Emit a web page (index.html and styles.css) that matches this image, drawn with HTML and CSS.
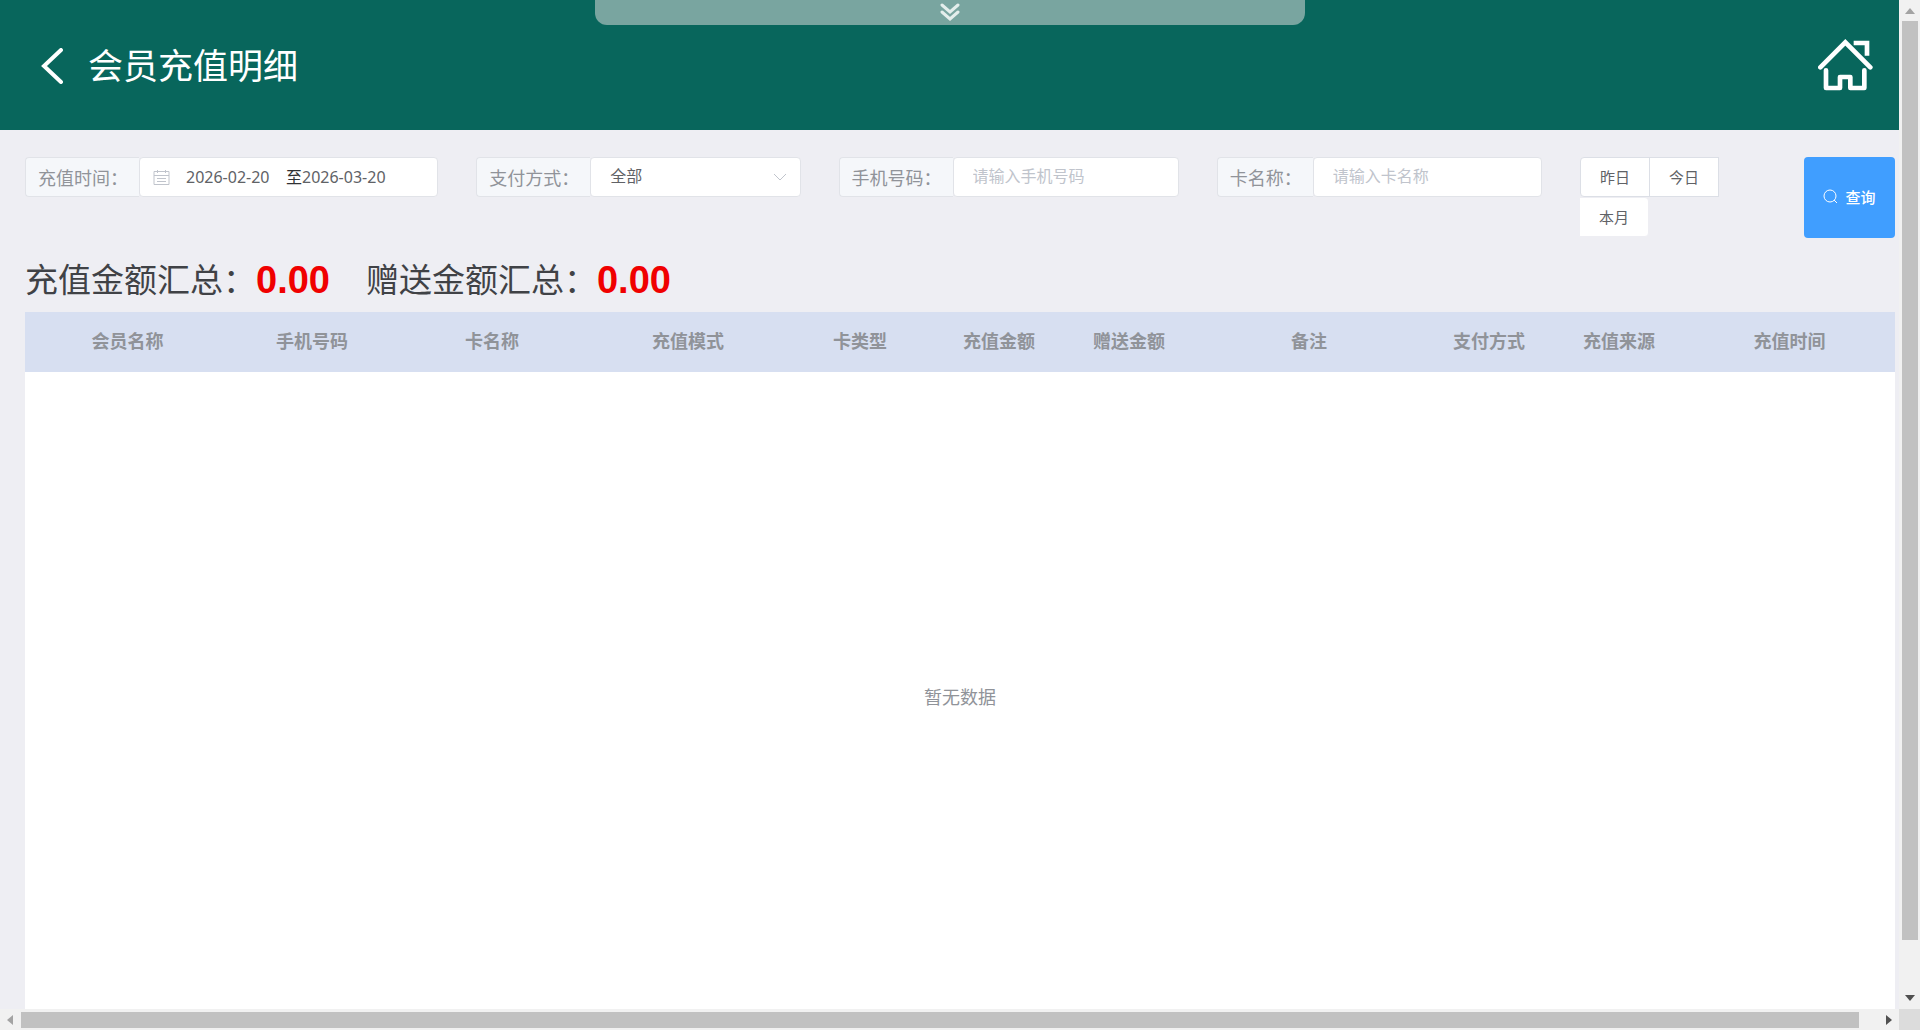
FILE: index.html
```html
<!DOCTYPE html>
<html lang="zh-CN">
<head>
    <meta charset="UTF-8">
    <meta name="viewport" content="width=device-width, initial-scale=1.0">
    <title>会员充值明细</title>
    <link rel="stylesheet" href="styles.css">
</head>
<body>
    <div class="window">
        <div class="page">
            <header class="header">
                <button type="button" class="back">
                    <svg width="22" height="36" viewBox="0 0 22 36"><path d="M20 2L3 18l17 16"/></svg>
                    <span class="title">会员充值明细</span>
                </button>
                <a href="#" class="home" aria-label="首页">
                    <svg width="55" height="52" viewBox="0 0 165 156">
                        <path d="M7 85L82 10l75 75" stroke-linecap="round"/>
                        <path d="M107 12h40v38" />
                        <path d="M24 94v53h42v-33h31v33h42V94" stroke-linecap="round" stroke-linejoin="round"/>
                    </svg>
                </a>
                <button type="button" class="pulldown" aria-label="展开">
                    <svg width="20" height="18" viewBox="0 0 20 18"><path d="M2 2l8 7 8-7M2 9l8 7 8-7"/></svg>
                </button>
            </header>

            <form class="filters">
                <div class="group">
                    <label for="startDate">充值时间：</label>
                    <div class="field date-range">
                        <svg class="calendar" width="17" height="17" viewBox="0 0 17 17"><path d="M1 2.5h15v13H1zM1 6.500h15M4.500 1v3M12.500 1v3M4 9.500h9M4 12.500h9"/></svg>
                        <input type="text" id="startDate" class="start" value="2026-02-20">
                        <span>至</span>
                        <input type="text" id="endDate" aria-label="结束日期" value="2026-03-20">
                    </div>
                </div>
                <div class="group">
                    <label for="payType">支付方式：</label>
                    <div class="field">
                        <select id="payType">
                            <option>全部</option>
                        </select>
                        <svg class="arrow" width="14" height="9" viewBox="0 0 14 9"><path d="M1 1l6 6 6-6"/></svg>
                    </div>
                </div>
                <div class="group">
                    <label for="phone">手机号码：</label>
                    <div class="field"><input type="text" id="phone" placeholder="请输入手机号码"></div>
                </div>
                <div class="group">
                    <label for="cardName">卡名称：</label>
                    <div class="field"><input type="text" id="cardName" placeholder="请输入卡名称"></div>
                </div>
                <div class="days">
                    <button type="button">昨日</button>
                    <button type="button">今日</button>
                    <button type="button">本月</button>
                </div>
                <button type="button" class="search">
                    <svg width="15" height="15" viewBox="0 0 15 15"><circle cx="7" cy="7" r="6"/><path d="M11 11l3 3"/></svg>
                    查询
                </button>
            </form>

            <div class="summary">
                <span>充值金额汇总：</span><b>0.00</b>
                <span class="second">赠送金额汇总：</span><b>0.00</b>
            </div>

            <div class="table-box">
                <table>
                    <colgroup>
                        <col class="w-name"><col class="w-phone"><col class="w-card"><col class="w-card"><col class="w-type"><col class="w-small"><col class="w-small"><col class="w-remark"><col class="w-small"><col class="w-small"><col class="w-time">
                    </colgroup>
                    <thead>
                        <tr>
                            <th>会员名称</th>
                            <th>手机号码</th>
                            <th>卡名称</th>
                            <th>充值模式</th>
                            <th>卡类型</th>
                            <th>充值金额</th>
                            <th>赠送金额</th>
                            <th>备注</th>
                            <th>支付方式</th>
                            <th>充值来源</th>
                            <th>充值时间</th>
                        </tr>
                    </thead>
                </table>
                <div class="empty">暂无数据</div>
            </div>
        </div>

        <div class="bar bar-y">
            <svg class="off" width="10" height="6" viewBox="0 0 10 6"><path d="M0 6l5-6 5 6z"/></svg>
            <div class="track"><div class="thumb"></div></div>
            <svg width="10" height="6" viewBox="0 0 10 6"><path d="M0 0l5 6 5-6z"/></svg>
        </div>
        <div class="bar bar-x">
            <svg class="off" width="6" height="10" viewBox="0 0 6 10"><path d="M6 0L0 5l6 5z"/></svg>
            <div class="track"><div class="thumb"></div></div>
            <svg width="6" height="10" viewBox="0 0 6 10"><path d="M0 0l6 5-6 5z"/></svg>
        </div>
        <div class="corner"></div>
    </div>
</body>
</html>
```
FILE: styles.css
```css
* {
    box-sizing: border-box;
}
body {
    margin: 0;
    font-family: "Noto Sans", "Noto Sans CJK SC", sans-serif;
    font-size: 16px;
    color: #606266;
    background: #eeeef3;
}
button, input, select {
    font-family: inherit;
    font-size: 16px;
    color: #606266;
    margin: 0;
}
button {
    cursor: pointer;
}
svg {
    display: block;
    flex: none;
    fill: none;
}

.window {
    display: grid;
    grid-template-columns: 1fr 21px;
    grid-template-rows: 1fr 21px;
    height: 100vh;
}
.page {
    display: flex;
    flex-direction: column;
    min-width: 0;
    min-height: 0;
    overflow: hidden;
}

/* header */
.header {
    position: relative;
    display: flex;
    justify-content: space-between;
    align-items: center;
    height: 130px;
    padding: 0 26px 0 41px;
    background: #08665c;
}
.back {
    display: flex;
    align-items: center;
    gap: 25px;
    padding: 2px 0 0;
    border: 0;
    background: none;
    color: #fff;
}
.back svg {
    stroke: #fff;
    stroke-width: 4;
    stroke-linecap: round;
}
.title {
    font-size: 35px;
    line-height: 50px;
}
.home svg {
    stroke: #fff;
    stroke-width: 14;
}
.pulldown {
    position: absolute;
    top: 0;
    left: 50%;
    display: flex;
    justify-content: center;
    align-items: center;
    width: 710px;
    height: 25px;
    margin-left: -355px;
    padding: 0 0 2px;
    border: 0;
    border-radius: 0 0 12px 12px;
    background: #79a5a0;
}
.pulldown svg {
    stroke: #e4eeec;
    stroke-width: 3;
    stroke-linecap: round;
}

/* filters */
.filters {
    display: grid;
    grid-template-columns: 413fr 324fr 340fr 325fr 186px 91px;
    column-gap: 38px;
    padding: 27px 4px 0 25px;
}
.group {
    display: flex;
    height: 40px;
}
.group label {
    padding: 0 11px 0 12px;
    border: 1px solid #e1e3e8;
    border-right: 0;
    border-radius: 4px 0 0 4px;
    background: #f5f7fa;
    color: #909399;
    font-size: 18px;
    line-height: 41px;
    white-space: nowrap;
}
.field {
    position: relative;
    flex: 1;
    min-width: 0;
    border: 1px solid #e1e3e8;
    border-radius: 4px;
    background: #fff;
}
.field input, .field select {
    width: 100%;
    height: 36px;
    padding: 0 19px;
    border: 0;
    outline: 0;
    background: none;
    appearance: none;
}
.field input::placeholder {
    color: #c0c4cc;
}
.date-range {
    display: flex;
    align-items: center;
    padding-left: 13px;
}
.date-range input {
    flex: 1;
    min-width: 0;
    padding: 0;
}
.date-range .start {
    flex: none;
    width: 100px;
}
.date-range span {
    color: #303133;
    line-height: 36px;
}
.calendar {
    margin-right: 16px;
    stroke: #c0c4cc;
}
.arrow {
    position: absolute;
    top: 15px;
    right: 13px;
    stroke: #c0c4cc;
    pointer-events: none;
}
.days {
    display: flex;
    flex-wrap: wrap;
    align-content: flex-start;
}
.days button {
    width: 70px;
    height: 40px;
    padding: 0 0 2px;
    border: 1px solid #dcdfe6;
    background: #fff;
    font-size: 15px;
}
.days button:first-child {
    border-radius: 4px 0 0 4px;
}
.days button + button {
    margin-left: -1px;
}
.days button:last-child {
    border-color: #eeeef3;
    border-radius: 0 4px 4px 0;
}
.search {
    display: flex;
    justify-content: center;
    align-items: center;
    gap: 7px;
    height: 81px;
    padding: 0 0 2px;
    border: 0;
    border-radius: 4px;
    background: #409eff;
    color: #fff;
    font-size: 15px;
    font-weight: 500;
}
.search svg {
    stroke: #fff;
}

/* totals */
.summary {
    display: flex;
    align-items: center;
    height: 74px;
    padding: 9px 0 0 25px;
    color: #404246;
    font-size: 33px;
    line-height: 48px;
}
.summary b {
    font-family: "Liberation Sans", Arial, sans-serif;
    font-size: 38px;
    color: #f00000;
}
.summary .second {
    margin-left: 36px;
}

/* table */
.table-box {
    flex: 1;
    display: flex;
    flex-direction: column;
    margin: 0 4px 0 25px;
    background: #fff;
    color: #909399;
    font-size: 18px;
}
table {
    width: 100%;
    table-layout: fixed;
    border-collapse: collapse;
}
th {
    height: 60px;
    padding: 0 0 4px;
    background: #d7dff1;
    font-weight: bold;
}
.w-name { width: 205px; }
.w-phone { width: 164px; }
.w-card { width: 196px; }
.w-type { width: 148px; }
.w-small { width: 130px; }
.w-remark { width: 230px; }
.w-time { width: 211px; }
.empty {
    flex: 1;
    display: flex;
    justify-content: center;
    align-items: center;
    padding-top: 10px;
}

/* scrollbars */
.bar {
    display: flex;
    align-items: center;
    justify-content: space-between;
    background: #f1f1f1;
}
.bar svg {
    fill: #505050;
}
.bar .off {
    fill: #a3a3a3;
}
.bar-y {
    flex-direction: column;
    padding: 8px 0;
}
.bar-x {
    padding: 0 7px;
}
.track {
    flex: 1;
}
.bar-y .track {
    width: 16px;
    margin: 7px 0;
}
.bar-x .track {
    height: 16px;
    margin: 0 8px;
}
.thumb {
    height: 100%;
    background: #c1c1c1;
}
.bar-y .thumb {
    height: 95%;
}
.bar-x .thumb {
    width: 99%;
}
.corner {
    background: #dcdcdc;
}
```
